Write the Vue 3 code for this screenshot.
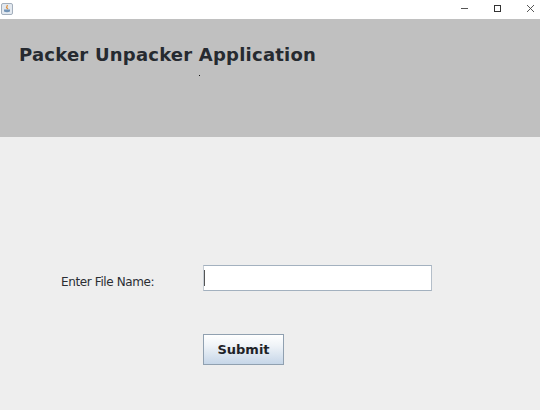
<script setup>
</script>

<template>
  <div class="window">
    <div class="titlebar">
      <svg class="java" width="12" height="12" viewBox="0 0 12 12">
        <rect x="0.5" y="0.5" width="11" height="11" rx="1.5" fill="#e3e9f0" stroke="#a3aebb" />
        <path d="M6.5 2 L5.5 4.5 L7 6" fill="none" stroke="#e0913f" stroke-width="1.2" />
        <path d="M3 6.5 H9 V8.5 Q6 10 3 8.5 Z" fill="#7394b6" />
      </svg>
      <div class="controls">
        <svg class="ctl" width="10" height="10" viewBox="0 0 10 10"><path d="M1 5.5 H8" stroke="#555" stroke-width="1" fill="none" /></svg>
        <svg class="ctl" width="10" height="10" viewBox="0 0 10 10"><rect x="1.5" y="2.5" width="6" height="6" stroke="#333" stroke-width="1" fill="none" /></svg>
        <svg class="ctl" width="10" height="10" viewBox="0 0 10 10"><path d="M1 2 L8 9 M8 2 L1 9" stroke="#444" stroke-width="0.9" fill="none" /></svg>
      </div>
    </div>
    <header class="banner">
      <h1 class="title">Packer Unpacker Application</h1>
      <span class="dot"></span>
    </header>
    <main class="content">
      <div class="field-row">
        <label class="label">Enter File Name:</label>
        <div class="input"><span class="caret"></span></div>
      </div>
      <div class="button-row">
        <button class="submit">Submit</button>
      </div>
    </main>
  </div>
</template>

<style scoped>
.window {
  width: 540px;
  height: 410px;
  display: flex;
  flex-direction: column;
  background: #eeeeee;
  overflow: hidden;
  font-family: "DejaVu Sans", sans-serif;
}
.titlebar {
  height: 19px;
  flex: none;
  background: #fff;
  display: flex;
  align-items: flex-start;
  justify-content: space-between;
  padding: 2px 4px 0 1px;
  box-sizing: border-box;
}
.java { display: block; margin-top: 1px; }
.controls {
  display: flex;
  gap: 23px;
  margin-top: 1px;
}
.ctl { display: block; }
.banner {
  position: relative;
  height: 118px;
  flex: none;
  background: #c0c0c0;
  padding: 25px 0 0 19px;
  box-sizing: border-box;
}
.title {
  margin: 0;
  font-size: 18px;
  line-height: 22px;
  font-weight: 700;
  color: #262a30;
  letter-spacing: 0.22px;
}
.dot {
  position: absolute;
  left: 199px;
  top: 56px;
  width: 1px;
  height: 1px;
  background: #111;
}
.content {
  flex: 1;
  padding: 128px 0 0 61px;
  box-sizing: border-box;
}
.field-row {
  display: flex;
  align-items: center;
  height: 26px;
}
.label {
  width: 142px;
  flex: none;
  margin-top: 8px;
  font-size: 12px;
  letter-spacing: -0.38px;
  color: #2a2d33;
}
.input {
  width: 229px;
  height: 26px;
  flex: none;
  box-sizing: border-box;
  background: #fff;
  border: 1px solid #a3b1bf;
  border-right: 1px solid #b4bec9;
  border-left: 1px solid #c5ccd3;
  display: flex;
  align-items: center;
}
.caret {
  width: 1px;
  height: 16px;
  background: #555;
}
.button-row {
  margin-top: 43px;
  padding-left: 142px;
}
.submit {
  display: block;
  width: 81px;
  height: 31px;
  box-sizing: border-box;
  border: 1px solid #90a0b0;
  background: linear-gradient(to bottom, #ffffff 0%, #f0f4f8 35%, #c6d6e8 100%);
  font-family: "DejaVu Sans", sans-serif;
  font-size: 13px;
  font-weight: 700;
  color: #1f2328;
  padding: 0;
}
</style>
